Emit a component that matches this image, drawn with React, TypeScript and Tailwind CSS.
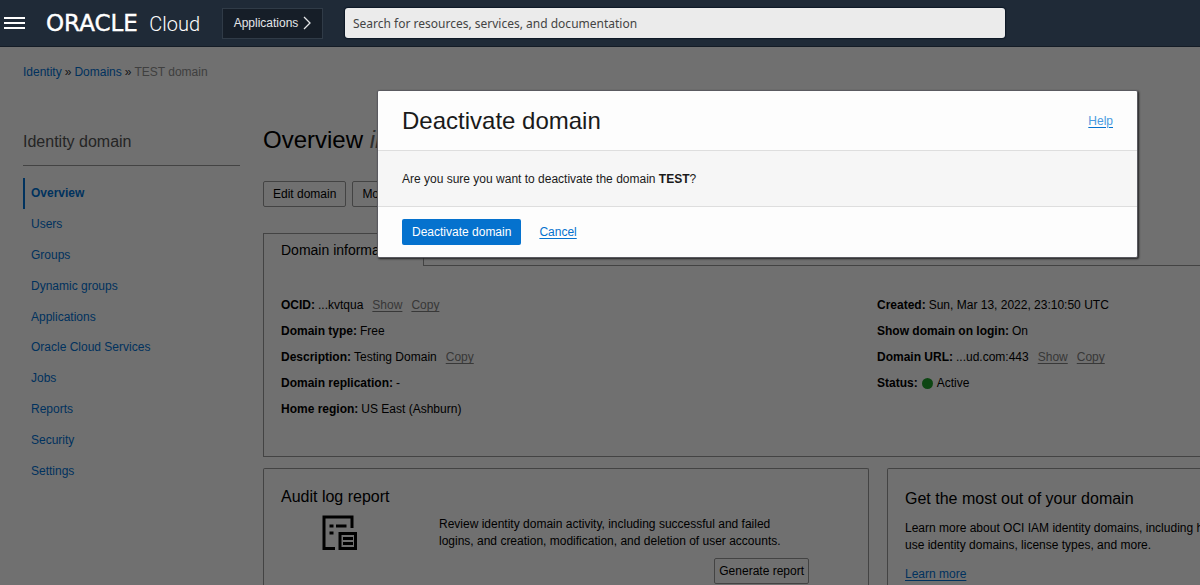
import React from "react";

const sideLinks = [
  "Overview",
  "Users",
  "Groups",
  "Dynamic groups",
  "Applications",
  "Oracle Cloud Services",
  "Jobs",
  "Reports",
  "Security",
  "Settings",
];

const actionClass = "text-[#808080] underline underline-offset-2";
const buttonClass =
  "h-[26px] rounded-xs border border-[#9a9a9a] text-[12px] whitespace-nowrap text-black";

function Field({ label, children }: { label: string; children: React.ReactNode }) {
  return (
    <div className="flex h-[26px] items-center gap-[3px] whitespace-nowrap">
      <dt className="font-bold">{label}:</dt>
      <dd className="flex items-center">{children}</dd>
    </div>
  );
}

function Actions({ names }: { names: string[] }) {
  return (
    <span className="ml-[9px] flex gap-[9px]">
      {names.map((name) => (
        <a key={name} href="#" className={actionClass}>
          {name}
        </a>
      ))}
    </span>
  );
}

function Header() {
  return (
    <header className="flex h-[47px] shrink-0 items-center border-b border-[#141c26] bg-[#1f2a37]">
      <button aria-label="Open navigation menu" className="ml-1 flex w-[21px] flex-col gap-[3px]">
        <span className="h-[2px] w-full bg-white" />
        <span className="h-[2px] w-full bg-white" />
        <span className="h-[2px] w-full bg-white" />
      </button>
      <a href="#" className="ml-[21px] flex w-[154px] items-baseline justify-between text-white">
        <span className="font-['DejaVu_Sans',sans-serif] text-[23px] leading-6 [-webkit-text-stroke:0.4px_white]">
          ORACLE
        </span>
        <span className="font-['Roboto',sans-serif] text-[20px] leading-6 font-light">Cloud</span>
      </a>
      <button className="ml-[22px] flex h-[31px] w-[101px] items-center justify-center gap-[5px] border border-[#303b47] bg-[#161e28] text-[12px] text-[#e4e6e8]">
        Applications
        <svg width="8" height="14" viewBox="0 0 8 14" fill="none" stroke="currentColor" strokeWidth="1.3">
          <path d="M1 1l6 6-6 6" />
        </svg>
      </button>
      <input
        type="search"
        aria-label="Search"
        placeholder="Search for resources, services, and documentation"
        className="ml-[22px] h-[30px] w-[55%] rounded-[3px] bg-[#ebebeb] px-2 font-['Noto_Sans',sans-serif] text-[12px] shadow-[0_0_1px_1px_#0d1826] placeholder:text-[#444]"
      />
    </header>
  );
}

function Sidebar() {
  return (
    <nav aria-label="Identity domain" className="w-[217px] shrink-0">
      <h2 className="h-[42px] border-b border-[#9a9a9a] pt-[6px] text-[16px] leading-6 text-[#555]">
        Identity domain
      </h2>
      <ul className="mt-3 flex h-[308px] flex-col text-[12px] text-[#0072d6]">
        {sideLinks.map((name, i) => (
          <li
            key={name}
            className={
              i === 0
                ? "flex flex-1 items-center border-l-2 border-[#0072d6] pl-[6px] font-bold"
                : "flex flex-1 items-center pl-2"
            }
          >
            <a href="#">{name}</a>
          </li>
        ))}
      </ul>
    </nav>
  );
}

function DomainInfo() {
  return (
    <section className="mt-[26px] h-[224px]">
      <div className="flex">
        <h2 className="h-[33px] w-[160px] border-t border-l border-[#9a9a9a] pt-[6px] pl-[17px] text-[14px] leading-5 font-medium whitespace-nowrap text-black">
          Domain information
        </h2>
        <div className="flex-1 border-b border-l border-[#9a9a9a]" />
      </div>
      <div className="grid h-[191px] grid-cols-[596px_1fr] border-b border-l border-[#9a9a9a] pt-[26px] pl-[17px]">
        <dl>
          <Field label="OCID">
            ...kvtqua
            <Actions names={["Show", "Copy"]} />
          </Field>
          <Field label="Domain type">Free</Field>
          <Field label="Description">
            Testing Domain
            <Actions names={["Copy"]} />
          </Field>
          <Field label="Domain replication">-</Field>
          <Field label="Home region">US East (Ashburn)</Field>
        </dl>
        <dl>
          <Field label="Created">Sun, Mar 13, 2022, 23:10:50 UTC</Field>
          <Field label="Show domain on login">On</Field>
          <Field label="Domain URL">
            ...ud.com:443
            <Actions names={["Show", "Copy"]} />
          </Field>
          <Field label="Status">
            <span className="mr-1 ml-px size-[11px] rounded-full bg-[#1fa02c]" />
            Active
          </Field>
        </dl>
      </div>
    </section>
  );
}

function AuditCard() {
  return (
    <section className="w-[606px] shrink-0 rounded-t-xs border border-b-0 border-[#9a9a9a] px-[17px] pt-[18px]">
      <h2 className="text-[16px] leading-5">Audit log report</h2>
      <div className="flex">
        <svg className="mt-2 ml-[41px] shrink-0" width="36" height="36" viewBox="0 0 36 36" fill="none" stroke="black" strokeWidth="3">
          <path d="M13 33.500H2V2H30V13M18 18.500H33.500V33.500H18ZM21 23.500H31M21 28.500H31M7.500 11H11.500M14 11H24.500M7.500 18H11.500" />
        </svg>
        <p className="mt-[9px] ml-[81px]">
          Review identity domain activity, including successful and failed
          <br />
          logins, and creation, modification, and deletion of user accounts.
        </p>
      </div>
      <div className="mt-[7px] flex justify-end pr-[42px]">
        <button className={buttonClass + " px-1"}>Generate report</button>
      </div>
    </section>
  );
}

function LearnCard() {
  return (
    <section className="shrink-0 rounded-t-xs border border-b-0 border-[#9a9a9a] px-[17px] pt-5 whitespace-nowrap">
      <h2 className="text-[16px] leading-5">Get the most out of your domain</h2>
      <p className="mt-[11px]">
        Learn more about OCI IAM identity domains, including how to
        <br />
        use identity domains, license types, and more.
      </p>
      <a href="#" className="mt-3 block text-[#0072d6] underline underline-offset-2">
        Learn more
      </a>
    </section>
  );
}

function Dialog() {
  return (
    <div
      role="dialog"
      aria-modal="true"
      aria-labelledby="dialog-title"
      className="absolute top-[90px] left-[377px] w-[761px] rounded-xs border border-[#5a5a60] bg-[#fdfdfd] text-[12px] text-[#1a1a1a] shadow-[1px_1px_2px_#222]"
    >
      <div className="flex h-[60px] items-center justify-between border-b border-[#dedede] px-6">
        <h1 id="dialog-title" className="text-[24px] leading-8">
          Deactivate domain
        </h1>
        <a href="#" className="text-[#4a9be0] underline decoration-[#0572ce] underline-offset-2">
          Help
        </a>
      </div>
      <p className="flex h-[56px] items-center border-b border-[#dedede] bg-[#f6f6f6] px-6">
        <span>
          Are you sure you want to deactivate the domain <b>TEST</b>?
        </span>
      </p>
      <div className="flex h-[50px] items-center gap-[18px] px-6">
        <button className="h-[26px] rounded-xs bg-[#0572ce] px-[10px] text-white">Deactivate domain</button>
        <a href="#" className="text-[#0572ce] underline underline-offset-2">
          Cancel
        </a>
      </div>
    </div>
  );
}

export default function App() {
  return (
    <div className="relative flex h-screen flex-col overflow-hidden bg-white font-['Liberation_Sans',Arial,sans-serif] text-[12px] text-black">
      <Header />
      <div className="relative min-h-0 flex-1 overflow-hidden pl-[23px]">
        <nav aria-label="Breadcrumb" className="mt-4 flex h-[18px] items-center gap-[3px]">
          <a href="#" className="text-[#0072d6]">Identity</a>
          <span className="text-[#333]">»</span>
          <a href="#" className="text-[#0072d6]">Domains</a>
          <span className="text-[#333]">»</span>
          <span className="text-[#909090]">TEST domain</span>
        </nav>
        <div className="mt-[43px] flex gap-[23px]">
          <Sidebar />
          <main className="min-w-0 flex-1">
            <h1 className="text-[24px] leading-8 whitespace-nowrap">
              Overview <i className="text-[#666]">in</i>
            </h1>
            <div className="mt-[25px] flex gap-[6px]">
              <button className={buttonClass + " px-[9px]"}>Edit domain</button>
              <button className={buttonClass + " px-[9px]"}>More actions</button>
            </div>
            <DomainInfo />
            <div className="mt-[11px] flex h-[160px] gap-[18px] leading-[17px]">
              <AuditCard />
              <LearnCard />
            </div>
          </main>
        </div>
        <div className="absolute inset-0 bg-black/56" />
      </div>
      <Dialog />
    </div>
  );
}
